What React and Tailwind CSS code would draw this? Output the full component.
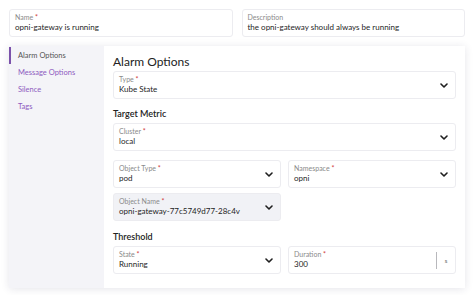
import React from 'react';

function Chevron() {
  return (
    <svg width="8" height="5" viewBox="0 0 8 5" className="shrink-0">
      <path d="M1 1l3 3 3-3" fill="none" stroke="#1f1f1f" strokeWidth="1.6" strokeLinecap="round" strokeLinejoin="round" />
    </svg>
  );
}

function Field({ label, value, required, select, disabled, suffix, className = '' }) {
  return (
    <div
      className={`h-[28px] flex items-center border border-[#ececf0] rounded-[3px] ${disabled ? 'bg-[#f1f2f6]' : 'bg-white'} ${className}`}
    >
      <div className="flex-1 min-w-0 pl-[5px] flex flex-col justify-center">
        <div className="text-[7px] leading-[9px] text-[#8a8a8a]">
          {label}
          {required && <span className="text-[#d03a3a]"> *</span>}
        </div>
        <div className="text-[8px] leading-[11px] text-[#1e1e1e] whitespace-nowrap">{value}</div>
      </div>
      {select && (
        <div className="pr-[7px] pl-2 flex items-center">
          <Chevron />
        </div>
      )}
      {suffix && (
        <div className="flex items-center h-full">
          <div className="w-[1.5px] h-[17px] bg-[#b8b8bc]" />
          <div className="w-[18px] text-center text-[6px] text-[#666]">{suffix}</div>
        </div>
      )}
    </div>
  );
}

export default function App() {
  const nav = ['Alarm Options', 'Message Options', 'Silence', 'Tags'];
  return (
    <div className="w-[474px] h-[295px] bg-white overflow-hidden px-[9px] pt-[9px]" style={{ fontFamily: 'Lato, "Open Sans", sans-serif' }}>
      <div className="grid grid-cols-2 gap-[9px]">
        <Field label="Name" required value="opni-gateway is running" />
        <Field label="Description" value="the opni-gateway should always be running" />
      </div>

      <div className="mt-[9px] h-[242px] flex shadow-[0_1px_8px_rgba(40,40,80,0.12)]">
        <div className="w-[95px] shrink-0 bg-[#f4f4f8] pt-[1px]">
          {nav.map((item, i) => (
            <div
              key={item}
              className={`h-[17px] flex items-center pl-[7px] text-[7.5px] ${
                i === 0 ? 'border-l-[2px] border-[#7b52ab] text-[#555]' : 'border-l-[2px] border-transparent text-[#8e5bbf]'
              }`}
            >
              {item}
            </div>
          ))}
        </div>

        <div className="flex-1 bg-white px-[9px] pt-[8px]">
          <div className="text-[12px] leading-[16px] text-[#222]">Alarm Options</div>
          <Field className="mt-[1px]" label="Type" required value="Kube State" select />

          <div className="mt-[9px] text-[9px] leading-[12px] font-semibold text-[#222]">Target Metric</div>
          <Field className="mt-[3px]" label="Cluster" required value="local" select />

          <div className="mt-[9px] grid grid-cols-2 gap-[7px]">
            <Field label="Object Type" required value="pod" select />
            <Field label="Namespace" required value="opni" select />
            <Field label="Object Name" required value="opni-gateway-77c5749d77-28c4v" select disabled className="-mt-[2px]" />
          </div>

          <div className="mt-[10px] text-[9px] leading-[12px] font-semibold text-[#222]">Threshold</div>
          <div className="mt-[3px] grid grid-cols-2 gap-[7px]">
            <Field label="State" required value="Running" select />
            <Field label="Duration" required value="300" suffix="s" />
          </div>
        </div>
      </div>
    </div>
  );
}
